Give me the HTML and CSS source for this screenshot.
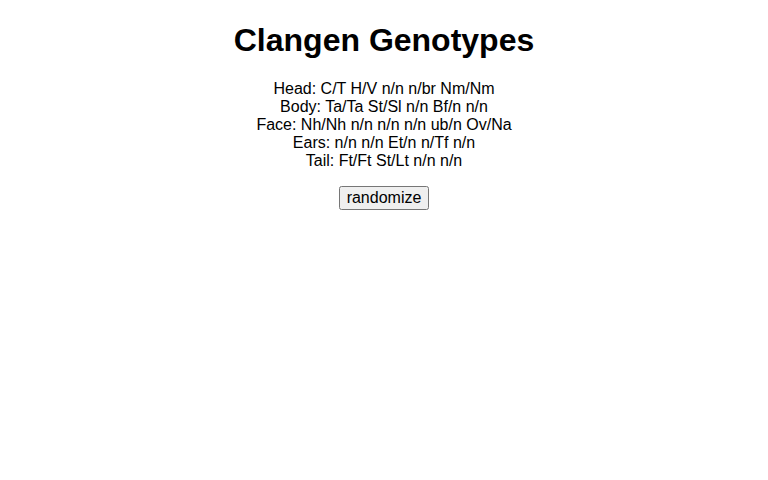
FILE: index.html
```html
<!DOCTYPE html>
<html lang="en">

<head>
    <meta charset="UTF-8">
    <meta name="viewport" content="width=device-width, initial-scale=1.0">
    <title>Clangen Genotypes</title>
    <link rel="stylesheet" href="styles.css">
</head>

<body>
    <h1 class="title">Clangen Genotypes</h1>
    <!-- gene list, one line per body part -->
    <p id="genes" class="genes">
        Head: C/T H/V n/n n/br Nm/Nm<br>
        Body: Ta/Ta St/Sl n/n Bf/n n/n<br>
        Face: Nh/Nh n/n n/n n/n ub/n Ov/Na<br>
        Ears: n/n n/n Et/n n/Tf n/n<br>
        Tail: Ft/Ft St/Lt n/n n/n
    </p>
    <button id="randomize" class="randomize">randomize</button>
</body>

</html>
```

FILE: styles.css
```css
body {
    margin: 0 8px;
    font-family: "Liberation Sans", Arial, sans-serif;
    text-align: center;
    color: #000;
}

.title {
    font-size: 32px;
    margin: 22px 0 21px;
}

.genes {
    font-size: 16px;
    line-height: 18px;
}

.randomize {
    font-family: "Liberation Sans", Arial, sans-serif;
    font-size: 16px;
    padding: 1px 6px;
}
```
